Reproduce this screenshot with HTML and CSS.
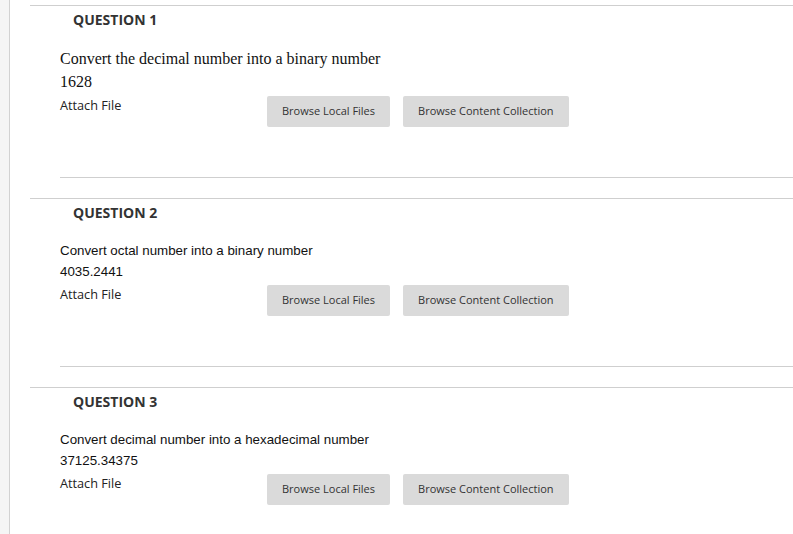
FILE: index.html
```html
<!DOCTYPE html>
<html>
<head>
<meta charset="utf-8">
<link rel="stylesheet" href="styles.css">
</head>
<body>
<div class="page">
  <div class="rail"></div>
  <main class="main">
    <section class="question">
      <h3 class="q-title">QUESTION 1</h3>
      <div class="q-body">
        <div class="q-text serif">
          <div>Convert the decimal number into a binary number</div>
          <div>1628</div>
        </div>
        <div class="attach">
          <span class="attach-label">Attach File</span>
          <div class="buttons">
            <button class="btn">Browse Local Files</button>
            <button class="btn">Browse Content Collection</button>
          </div>
        </div>
      </div>
      <div class="sep"></div>
    </section>
    <section class="question">
      <h3 class="q-title">QUESTION 2</h3>
      <div class="q-body">
        <div class="q-text sans">
          <div>Convert octal number into a binary number</div>
          <div>4035.2441</div>
        </div>
        <div class="attach">
          <span class="attach-label">Attach File</span>
          <div class="buttons">
            <button class="btn">Browse Local Files</button>
            <button class="btn">Browse Content Collection</button>
          </div>
        </div>
      </div>
      <div class="sep"></div>
    </section>
    <section class="question">
      <h3 class="q-title">QUESTION 3</h3>
      <div class="q-body">
        <div class="q-text sans">
          <div>Convert decimal number into a hexadecimal number</div>
          <div>37125.34375</div>
        </div>
        <div class="attach">
          <span class="attach-label">Attach File</span>
          <div class="buttons">
            <button class="btn">Browse Local Files</button>
            <button class="btn">Browse Content Collection</button>
          </div>
        </div>
      </div>
    </section>
  </main>
</div>
</body>
</html>
```
FILE: styles.css
```css
html, body {
  margin: 0;
  padding: 0;
  background: #fff;
  height: 100%;
}
.page {
  display: flex;
  min-height: 534px;
  font-family: "Open Sans", sans-serif;
}
.rail {
  width: 9px;
  flex: none;
  background: #f5f5f5;
  border-right: 1px solid #d2d2d2;
}
.main {
  flex: 1;
  padding-top: 5px;
}
.question {
  margin-left: 20px;
  border-top: 1px solid #cfcfcf;
  margin-bottom: 20px;
}
.q-title {
  margin: 0;
  padding: 4px 0 0 43px;
  font-family: "Open Sans", sans-serif;
  font-weight: 700;
  font-size: 14px;
  line-height: 20px;
  color: #333;
}
.q-body {
  padding-left: 30px;
  padding-top: 16px;
}
.q-text {
  color: #111;
}
.q-text.serif {
  font-family: "Liberation Serif", "Times New Roman", serif;
  font-size: 16px;
  line-height: 23px;
  padding-top: 1px;
}
.q-text.sans {
  font-family: "Liberation Sans", Arial, sans-serif;
  font-size: 13.33px;
  line-height: 21px;
  padding-top: 1px;
}
.attach {
  display: flex;
  align-items: flex-start;
  margin-top: 2px;
}
.attach-label {
  width: 207px;
  flex: none;
  font-size: 12.7px;
  line-height: 20px;
  color: #222;
}
.buttons {
  display: flex;
  gap: 13px;
  margin-top: 1px;
}
.btn {
  font-family: "Open Sans", sans-serif;
  font-size: 11px;
  line-height: 15px;
  color: #333;
  background: #dadada;
  border: none;
  border-radius: 2px;
  padding: 7px 15px 9px;
  height: 31px;
  margin: 0;
}
.sep {
  margin-left: 30px;
  margin-top: 50px;
  border-top: 1px solid #cfcfcf;
}
```
